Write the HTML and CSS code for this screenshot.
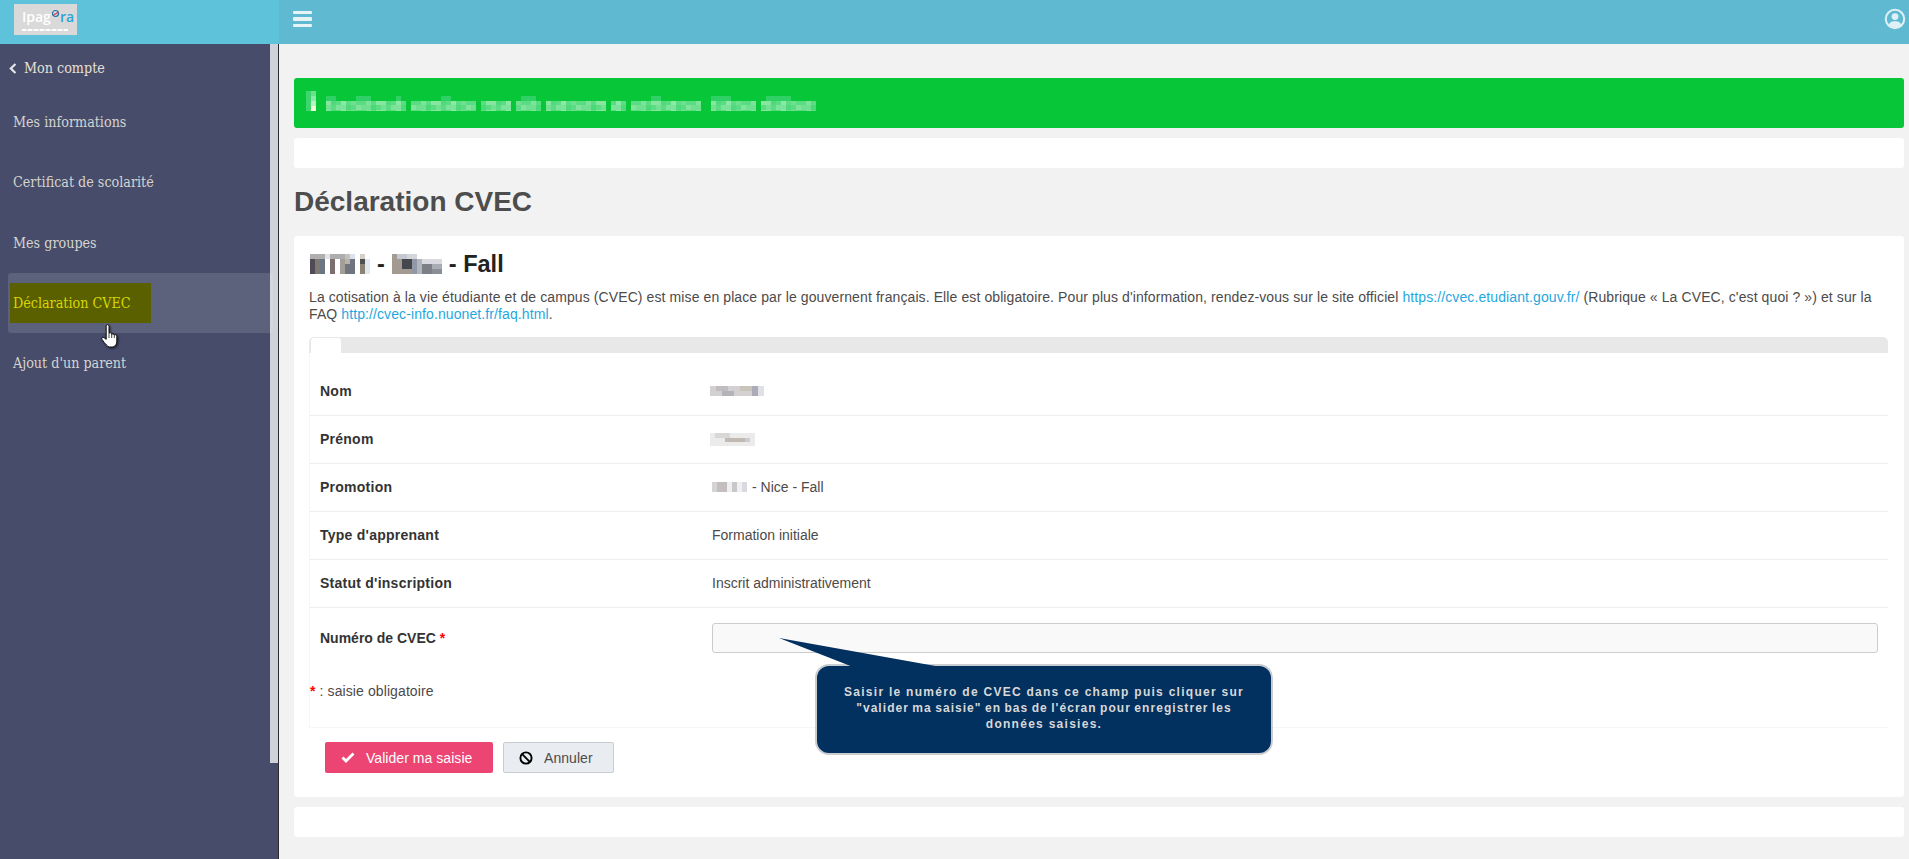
FILE: index.html
```html
<!DOCTYPE html>
<html lang="fr">
<head>
<meta charset="utf-8">
<title>Déclaration CVEC</title>
<link rel="stylesheet" href="styles.css">
</head>
<body>
<header class="top">
  <div class="brand">
    <div class="logo">
      <div class="logo-word">
        <span class="logo-a">Ipag</span>
        <svg class="logo-mark" width="9" height="9" viewBox="0 0 9 9"><circle cx="4.5" cy="4.5" r="3" fill="none" stroke="#1c6fa8" stroke-width="1.2"/><path d="M2 6.5 L7.5 3" stroke="#d33a4a" stroke-width="1.2"/></svg>
        <span class="logo-b">ra</span>
      </div>
      <div class="logo-tag"></div>
    </div>
  </div>
  <div class="topbar">
    <div class="burger"><span></span><span></span><span></span></div>
    <svg class="user" width="22" height="22" viewBox="0 0 22 22">
      <circle cx="11" cy="11" r="9.2" fill="none" stroke="#dff0f7" stroke-width="2"/>
      <circle cx="11" cy="8.6" r="3.4" fill="#dff0f7"/>
      <path d="M4.8 17 C5.6 13.8 8 13.2 11 13.2 C14 13.2 16.4 13.8 17.2 17 C15.6 18.8 13.4 19.6 11 19.6 C8.6 19.6 6.4 18.8 4.8 17 Z" fill="#dff0f7"/>
    </svg>
  </div>
</header>
<div class="shell">
  <aside class="side">
    <div class="scroll"></div>
    <nav class="nav">
      <a class="back">
        <svg class="chev" width="8" height="11" viewBox="0 0 8 11"><polyline points="6.5,1 1.8,5.5 6.5,10" fill="none" stroke="#e6e6e6" stroke-width="2.2"/></svg>
        Mon compte
      </a>
      <a class="item">Mes informations</a>
      <a class="item">Certificat de scolarité</a>
      <a class="item">Mes groupes</a>
      <a class="item item-on"><span class="mark">Déclaration CVEC</span></a>
      <a class="item">Ajout d'un parent</a>
    </nav>
    <svg class="hand" width="20" height="26" viewBox="0 0 20 26">
      <path d="M5.5 1.2 C6.4 0.2 8 0.6 8 2.2 V9.4 C8.4 8.4 10.5 8.4 10.7 9.9 V10.6 C11.2 9.6 13.1 9.7 13.3 11.1 C13.9 10.3 15.8 10.6 15.8 12.2 V17.2 C15.8 20 14.4 22.2 12 23 H8.2 C6.2 22.4 4.8 20 3.2 18.4 L1 15.4 C0.2 13.8 1.8 12.8 3.2 13.8 L5.2 15.4 V2.2 Z" fill="#fff" stroke="#111" stroke-width="1"/>
      <path d="M8 9.4 V14 M10.7 10.6 V14 M13.3 11.1 V14" stroke="#111" stroke-width="0.8" fill="none"/>
    </svg>
  </aside>
  <main class="main">
    <div class="alert">
      <svg class="blur-alert" width="512" height="26" viewBox="0 0 512 26">
        <defs>
          <pattern id="g" width="55" height="10" patternUnits="userSpaceOnUse">
            <rect width="55" height="10" fill="#5adc82"/>
            <rect x="5" width="5" height="5" fill="#7be39a"/><rect x="15" width="10" height="5" fill="#86e6a0"/><rect x="25" width="5" height="5" fill="#4fd97a"/><rect x="35" width="5" height="5" fill="#8ce8a5"/><rect x="45" width="5" height="5" fill="#6fe08f"/>
            <rect y="5" width="10" height="5" fill="#6fe08f"/><rect x="10" y="5" width="5" height="5" fill="#4bd877"/><rect x="20" y="5" width="5" height="5" fill="#72e192"/><rect x="30" y="5" width="10" height="5" fill="#7be39a"/><rect x="40" y="5" width="5" height="5" fill="#4fd97a"/><rect x="50" y="5" width="5" height="5" fill="#80e49c"/>
          </pattern>
        </defs>
        <rect x="0" y="1" width="5" height="20" fill="#3fd56e"/><rect x="5" y="1" width="5" height="5" fill="#6be08c"/><rect x="5" y="6" width="5" height="5" fill="#8ce8a5"/><rect x="5" y="11" width="5" height="5" fill="#b9f0c4"/><rect x="5" y="16" width="5" height="5" fill="#effcd4"/>
        <rect x="20" y="6" width="10" height="5" fill="#2fd065"/><rect x="50" y="6" width="15" height="5" fill="#2fd065"/><rect x="90" y="6" width="5" height="5" fill="#2fd065"/><rect x="135" y="6" width="10" height="5" fill="#2fd065"/><rect x="215" y="6" width="15" height="5" fill="#2fd065"/><rect x="345" y="6" width="10" height="5" fill="#2fd065"/><rect x="405" y="6" width="20" height="5" fill="#2fd065"/><rect x="460" y="6" width="25" height="5" fill="#2fd065"/>
        <rect x="20" y="11" width="80" height="10" fill="url(#g)"/><rect x="105" y="11" width="65" height="10" fill="url(#g)"/><rect x="175" y="11" width="30" height="10" fill="url(#g)"/><rect x="210" y="11" width="25" height="10" fill="url(#g)"/><rect x="240" y="11" width="60" height="10" fill="url(#g)"/><rect x="305" y="11" width="15" height="10" fill="url(#g)"/><rect x="325" y="11" width="70" height="10" fill="url(#g)"/><rect x="405" y="11" width="45" height="10" fill="url(#g)"/><rect x="455" y="11" width="55" height="10" fill="url(#g)"/>
      </svg>
    </div>
    <div class="blank"></div>
    <h1 class="page-title">Déclaration CVEC</h1>
    <section class="card">
      <h2 class="card-title">
        <svg width="60" height="20" viewBox="0 0 60 20" class="blur-t">
          <rect width="60" height="20" fill="#fff"/>
          <rect x="0" width="15" height="5" fill="#b0aeae"/><rect x="15" width="5" height="5" fill="#dfe3ea"/><rect x="20" width="15" height="5" fill="#aeadad"/><rect x="35" width="5" height="5" fill="#c5c0bc"/><rect x="40" width="5" height="5" fill="#dde1ea"/><rect x="50" width="5" height="5" fill="#d6cfc8"/>
          <rect y="5" width="5" height="15" fill="#4f4a55"/><rect x="5" y="5" width="5" height="15" fill="#7d7872"/><rect x="10" y="5" width="5" height="15" fill="#6c7682"/><rect x="20" y="5" width="5" height="15" fill="#7d6e70"/><rect x="30" y="5" width="5" height="15" fill="#a39f98"/><rect x="35" y="5" width="10" height="15" fill="#6f7680"/><rect x="50" y="5" width="5" height="15" fill="#8b8272"/><rect x="55" y="5" width="5" height="15" fill="#e0e8f4"/><rect x="50" y="5" width="5" height="5" fill="#4f4f4d"/><rect x="35" y="5" width="5" height="5" fill="#b8b2aa"/>
        </svg>
        <span>-</span>
        <svg width="50" height="20" viewBox="0 0 50 20" class="blur-t">
          <rect width="50" height="20" fill="#a39a92"/>
          <rect x="5" width="10" height="5" fill="#c4c8d0"/><rect x="15" width="10" height="5" fill="#d4d6da"/><rect x="25" width="25" height="5" fill="#fff"/><rect x="25" y="5" width="5" height="15" fill="#b0b6bc"/><rect x="10" y="5" width="10" height="10" fill="#44484e"/><rect x="20" y="5" width="5" height="15" fill="#8f98a4"/><rect x="30" y="10" width="10" height="10" fill="#7c7f86"/><rect x="40" y="10" width="10" height="5" fill="#a8acb4"/><rect x="40" y="15" width="10" height="5" fill="#8a8f96"/><rect x="30" y="5" width="20" height="5" fill="#d8dadf"/>
        </svg>
        <span>- Fall</span>
      </h2>
      <p class="intro">La cotisation à la vie étudiante et de campus (CVEC) est mise en place par le gouvernent français. Elle est obligatoire. Pour plus d'information, rendez-vous sur le site officiel <a class="link">https://cvec.etudiant.gouv.fr/</a> (Rubrique « La CVEC, c'est quoi ? ») et sur la FAQ <a class="link">http://cvec-info.nuonet.fr/faq.html</a>.</p>
      <div class="tabs"><div class="tab"></div></div>
      <div class="panel">
        <div class="row"><div class="lab">Nom</div><div class="val val-blur">
          <svg width="54" height="10" viewBox="0 0 54 10"><rect width="54" height="10" fill="#d2d0d0"/><rect x="6" width="12" height="5" fill="#c0bcc0"/><rect x="12" y="5" width="12" height="5" fill="#b4b3ba"/><rect x="30" width="12" height="5" fill="#c8c3bb"/><rect x="42" width="6" height="10" fill="#acacb8"/><rect x="48" width="6" height="10" fill="#dfe1e6"/></svg>
        </div></div>
        <div class="row"><div class="lab">Prénom</div><div class="val val-blur">
          <svg width="45" height="13" viewBox="0 0 45 13"><rect width="45" height="13" fill="#ebebeb"/><rect x="5" width="15" height="5" fill="#d8d8d8"/><rect x="15" y="5" width="20" height="4" fill="#c0b9b4"/><rect x="35" y="5" width="5" height="4" fill="#cbcbd0"/></svg>
        </div></div>
        <div class="row"><div class="lab">Promotion</div><div class="val">
          <svg width="35" height="10" viewBox="0 0 35 10"><rect width="35" height="10" fill="#d6d3d3"/><rect x="5" width="10" height="10" fill="#c4bec0"/><rect x="15" width="5" height="10" fill="#efefef"/><rect x="20" width="5" height="10" fill="#c8c8cc"/><rect x="25" width="5" height="10" fill="#f0f0f0"/><rect x="30" width="5" height="10" fill="#d8dadf"/></svg>
          <span class="val-gap">- Nice - Fall</span>
        </div></div>
        <div class="row"><div class="lab">Type d'apprenant</div><div class="val">Formation initiale</div></div>
        <div class="row"><div class="lab">Statut d'inscription</div><div class="val">Inscrit administrativement</div></div>
        <div class="row row-input"><div class="lab lab-plain">Numéro de CVEC <span class="req">*</span></div><input class="field" type="text" aria-label="Numéro de CVEC"></div>
        <p class="note"><span class="req">*</span> : saisie obligatoire</p>
      </div>
      <div class="actions">
        <button class="btn btn-ok" type="button">
          <svg width="14" height="11" viewBox="0 0 14 11"><polyline points="1.5,5.5 5,9 12.5,1.5" fill="none" stroke="#fff" stroke-width="2.8"/></svg>
          Valider ma saisie
        </button>
        <button class="btn btn-no" type="button">
          <svg width="14" height="14" viewBox="0 0 14 14"><circle cx="7" cy="7" r="5.6" fill="none" stroke="#000" stroke-width="1.9"/><line x1="3.2" y1="3.2" x2="10.8" y2="10.8" stroke="#000" stroke-width="1.9"/></svg>
          Annuler
        </button>
      </div>
    </section>
    <div class="blank"></div>
  </main>
</div>
<div class="callout">
  <svg class="tail" width="170" height="30" viewBox="0 0 170 30"><polygon points="0,0 74,29 162,29" fill="#02305f"/></svg>
  <p class="callout-text">Saisir le numéro de CVEC dans ce champ puis cliquer sur <span class="tight">"valider ma saisie" en bas de l'écran pour enregistrer les</span> données saisies.</p>
</div>
</body>
</html>
```
FILE: styles.css
```css
* { box-sizing: border-box; }
html, body { margin: 0; height: 859px; overflow: hidden; }
body { display: flex; flex-direction: column; font-family: "Liberation Sans", Arial, sans-serif; font-size: 14px; color: #4d4a4a; background: #f2f2f2; }

.top { display: flex; height: 44px; flex: none; }
.brand { width: 279px; background: #5fc2db; padding: 4px 0 0 14px; }
.logo { width: 63px; height: 31px; background: #d9d9d9; padding: 3px 0 0 8px; }
.logo-word { display: flex; align-items: center; height: 20px; line-height: 20px; font-family: "Open Sans", sans-serif; font-size: 14px; }
.logo-a { color: #fff; font-weight: 600; }
.logo-mark { margin: -8px 0 0 0; flex: none; }
.logo-b { color: #2aa5d8; font-weight: 600; }
.logo-tag { width: 46px; height: 2px; margin-top: 2px; background: repeating-linear-gradient(90deg, #fff 0 4px, #e8e8e8 4px 6px); }
.topbar { flex: 1; display: flex; align-items: center; justify-content: space-between; background: #5fb9d0; padding: 0 3px 0 14px; }
.burger { display: flex; flex-direction: column; gap: 3px; width: 19px; margin-top: -6px; }
.burger span { height: 3.5px; background: #e6f3f7; border-radius: 1px; }
.user { margin-top: -6px; }

.shell { flex: 1; display: flex; min-height: 0; }
.side { position: relative; width: 279px; flex: none; background: #464c6a; border-right: 1px solid #2a2a2e; }
.scroll { position: absolute; top: 0; right: 0; width: 8px; height: 719px; background: #cfd2db; }
.nav { position: relative; display: flex; flex-direction: column; font-family: "DejaVu Serif Condensed", "DejaVu Serif", serif; font-size: 14.2px; color: #d6d4d0; }
.back { display: flex; align-items: center; gap: 7px; height: 48px; padding-left: 9px; color: #e6e0d6; }
.chev { flex: none; }
.item { display: flex; align-items: center; height: 60.25px; margin-left: 8px; width: 265px; padding-left: 5px; border-radius: 3px; }
.item-on { background: rgba(255, 255, 255, .12); color: #d8d800; }
.mark { display: flex; align-items: center; width: 141px; height: 40px; margin-left: -3px; padding-left: 3px; background: #5a5f00; white-space: nowrap; }
.hand { position: absolute; left: 101px; top: 280px; filter: drop-shadow(1.5px 1.5px 1px rgba(0, 0, 0, .6)); }

.main { flex: 1; min-width: 0; padding: 34px 5px 0 15px; }
.alert { display: flex; align-items: center; height: 50px; padding-left: 12px; background: #07c638; border-radius: 3px; }
.blank { height: 30px; margin-top: 10px; background: #fff; border-radius: 3px; }
.page-title { height: 68px; margin: 0; font-size: 28px; line-height: 68px; font-weight: 700; color: #4d4d4d; }
.card { height: 561px; padding: 14px 16px 0 15px; background: #fff; border-radius: 3px; }
.card-title { display: flex; align-items: center; gap: 7px; height: 28px; margin: 0 0 0 1px; font-size: 23.5px; line-height: 28px; font-weight: 700; color: #222; }
.intro { height: 34px; margin: 11px 0 14px; font-size: 14px; line-height: 17px; letter-spacing: .1px; }
.link { color: #1fa8e0; }
.tabs { height: 16px; background: #e8e8e8; border-radius: 5px 5px 0 0; padding: 1px 0 0 2px; }
.tab { width: 30px; height: 15px; background: #fff; border-radius: 3px 3px 0 0; }
.panel { height: 375px; padding-top: 15px; border-left: 1px solid #f6f6f6; border-bottom: 1px solid #f6f6f6; }
.row { display: flex; align-items: center; height: 48px; padding: 0 10px 1px; border-bottom: 1px solid #eeeeee; }
.lab { width: 392px; flex: none; font-weight: 700; color: #333; letter-spacing: .25px; }
.lab-plain { letter-spacing: 0; }
.val { display: flex; align-items: center; }
.val-blur { margin-left: -2px; }
.val-gap { margin-left: 5px; }
.row-input { height: 60px; border-bottom: 0; padding-bottom: 0; }
.field { flex: 1; height: 30px; background: #f9f9f9; border: 1px solid #cccccc; border-radius: 3px; }
.req { color: #f00; font-weight: 700; }
.note { margin: 15px 0 0; line-height: 17px; letter-spacing: .1px; }
.actions { display: flex; gap: 10px; margin: 14px 0 0 16px; }
.btn { display: flex; align-items: center; height: 31px; padding: 0; font: inherit; letter-spacing: .05px; border-radius: 2px; }
.btn-ok { gap: 11px; width: 168px; padding-left: 16px; color: #fff; background: #ec4573; border: 0; }
.btn-no { gap: 11px; width: 111px; padding-left: 15px; color: #4d4a4a; background: #e9edf1; border: 1px solid #c8ccd0; }

.callout { position: absolute; left: 815px; top: 664px; width: 458px; height: 91px; padding-top: 18px; background: #02305f; border: 2px solid #c9ccd0; border-radius: 14px; }
.tail { position: absolute; left: -38px; top: -28px; }
.callout-text { margin: 0 auto; width: 420px; font-size: 12px; line-height: 16px; font-weight: 700; letter-spacing: 1.27px; color: #d8d8d8; text-align: center; }
.tight { letter-spacing: 1.05px; word-spacing: -1px; }
```
